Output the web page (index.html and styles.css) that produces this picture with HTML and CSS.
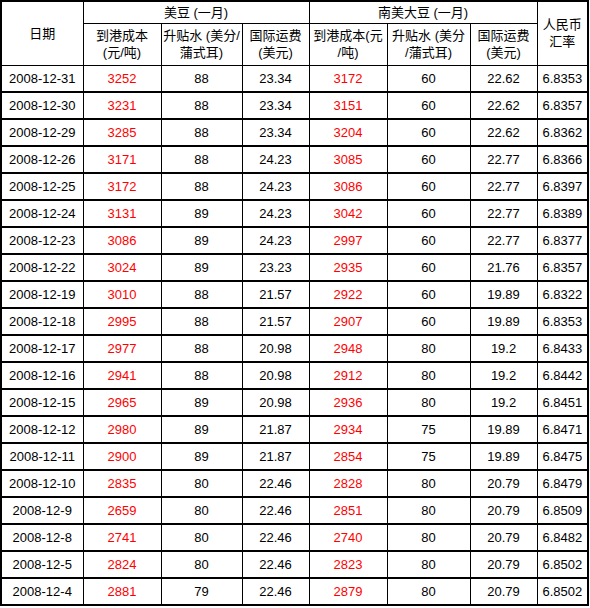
FILE: index.html
```html
<!DOCTYPE html>
<html>
	<head>
		<meta charset="UTF-8">
		<title>大豆到港成本</title>
		<link rel="stylesheet" href="styles.css">
	</head>
	<body>
		<table class="cost">
			<colgroup>
				<col class="c-date">
				<col class="c-cost1">
				<col class="c-prem1">
				<col class="c-ship1">
				<col class="c-cost2">
				<col class="c-prem2">
				<col class="c-ship2">
				<col class="c-rate">
			</colgroup>
			<thead>
				<tr class="head1">
					<th rowspan="2">日期</th>
					<th colspan="3">美豆 (一月)</th>
					<th colspan="3">南美大豆 (一月)</th>
					<th rowspan="2">人民币<br>汇率</th>
				</tr>
				<tr class="head2">
					<th>到港成本<br>(元/吨)</th>
					<th>升贴水 (美分/<br>蒲式耳)</th>
					<th>国际运费<br>(美元)</th>
					<th>到港成本(元<br>/吨)</th>
					<th>升贴水 (美分<br>/蒲式耳)</th>
					<th>国际运费<br>(美元)</th>
				</tr>
			</thead>
			<tbody id="rows"></tbody>
		</table>
		<script type="text/javascript">
			//日期,美豆成本,美豆升贴水,美豆运费,南美成本,南美升贴水,南美运费,汇率
			var data=[
				["2008-12-31","3252","88","23.34","3172","60","22.62","6.8353"],
				["2008-12-30","3231","88","23.34","3151","60","22.62","6.8357"],
				["2008-12-29","3285","88","23.34","3204","60","22.62","6.8362"],
				["2008-12-26","3171","88","24.23","3085","60","22.77","6.8366"],
				["2008-12-25","3172","88","24.23","3086","60","22.77","6.8397"],
				["2008-12-24","3131","89","24.23","3042","60","22.77","6.8389"],
				["2008-12-23","3086","89","24.23","2997","60","22.77","6.8377"],
				["2008-12-22","3024","89","23.23","2935","60","21.76","6.8357"],
				["2008-12-19","3010","88","21.57","2922","60","19.89","6.8322"],
				["2008-12-18","2995","88","21.57","2907","60","19.89","6.8353"],
				["2008-12-17","2977","88","20.98","2948","80","19.2","6.8433"],
				["2008-12-16","2941","88","20.98","2912","80","19.2","6.8442"],
				["2008-12-15","2965","89","20.98","2936","80","19.2","6.8451"],
				["2008-12-12","2980","89","21.87","2934","75","19.89","6.8471"],
				["2008-12-11","2900","89","21.87","2854","75","19.89","6.8475"],
				["2008-12-10","2835","80","22.46","2828","80","20.79","6.8479"],
				["2008-12-9","2659","80","22.46","2851","80","20.79","6.8509"],
				["2008-12-8","2741","80","22.46","2740","80","20.79","6.8482"],
				["2008-12-5","2824","80","22.46","2823","80","20.79","6.8502"],
				["2008-12-4","2881","79","22.46","2879","80","20.79","6.8502"]
			];
			var tbody=document.getElementById("rows");
			var html="";
			for(var i=0;i<data.length;i++){
				html+="<tr>";
				for(var j=0;j<data[i].length;j++){
					//到港成本两列用红字
					var cls=(j==1||j==4)?' class="red"':'';
					html+="<td"+cls+">"+data[i][j]+"</td>";
				}
				html+="</tr>";
			}
			tbody.innerHTML=html;
		</script>
	</body>
</html>
```
FILE: styles.css
```css
*{
	padding: 0;
	margin: 0;
}
body{
	background: #fff;
	font-family: "Liberation Sans", "Noto Sans CJK SC", sans-serif;
	font-size: 13px;
	color: #000;
}
.cost{
	border-collapse: collapse;
	table-layout: fixed;
	width: 587px;
	border: 2px solid #000;
}
.cost col.c-date{width: 82px;}
.cost col.c-cost1{width: 78px;}
.cost col.c-prem1{width: 81px;}
.cost col.c-ship1{width: 67px;}
.cost col.c-cost2{width: 78px;}
.cost col.c-prem2{width: 83px;}
.cost col.c-ship2{width: 67px;}
.cost col.c-rate{width: 51px;}
.cost th,
.cost td{
	border: 1px solid #000;
	text-align: center;
	vertical-align: middle;
	font-weight: normal;
	white-space: nowrap;
	overflow: hidden;
}
.cost th{
	line-height: 17px;
}
.cost tr.head1{height: 22px;}
.cost tr.head2{height: 42px;}
.cost tbody tr{height: 27px;}
.cost tbody td{
	border-top: 2px solid #000;
	line-height: 15px;
}
.cost tbody tr:first-child td{
	border-top: 1px solid #000;
}
.cost td.red{
	color: #f00;
}
```
